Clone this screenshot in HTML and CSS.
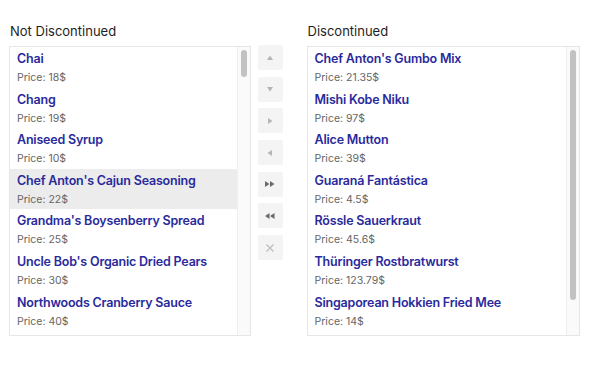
FILE: index.html
```html
<!DOCTYPE html>
<html lang="en">
  <head>
    <meta charset="UTF-8" />
    <title>ListBox</title>
    <link rel="stylesheet" href="styles.css">
  </head>
  <body>
    <div class="picklist">
      <div class="list-col list-col-source">
        <div class="list-title">Not Discontinued</div>
        <div class="list-box">
          <ul class="list-items">
            <li class="list-item"><div class="item-name">Chai</div><div class="item-price">Price: 18$</div></li>
            <li class="list-item"><div class="item-name">Chang</div><div class="item-price">Price: 19$</div></li>
            <li class="list-item"><div class="item-name">Aniseed Syrup</div><div class="item-price">Price: 10$</div></li>
            <li class="list-item selected"><div class="item-name">Chef Anton's Cajun Seasoning</div><div class="item-price">Price: 22$</div></li>
            <li class="list-item"><div class="item-name">Grandma's Boysenberry Spread</div><div class="item-price">Price: 25$</div></li>
            <li class="list-item"><div class="item-name">Uncle Bob's Organic Dried Pears</div><div class="item-price">Price: 30$</div></li>
            <li class="list-item"><div class="item-name">Northwoods Cranberry Sauce</div><div class="item-price">Price: 40$</div></li>
          </ul>
          <div class="scroll-track"><div class="scroll-thumb thumb-short"></div></div>
        </div>
      </div>

      <div class="toolbar">
        <button class="tool-btn" disabled>
          <svg width="8" height="8" viewBox="0 0 8 8"><path d="M4 1.5 L7 6 L1 6 Z" /></svg>
        </button>
        <button class="tool-btn" disabled>
          <svg width="8" height="8" viewBox="0 0 8 8"><path d="M1 2 L7 2 L4 6.5 Z" /></svg>
        </button>
        <button class="tool-btn" disabled>
          <svg width="8" height="8" viewBox="0 0 8 8"><path d="M2 1 L6.5 4 L2 7 Z" /></svg>
        </button>
        <button class="tool-btn" disabled>
          <svg width="8" height="8" viewBox="0 0 8 8"><path d="M6 1 L1.5 4 L6 7 Z" /></svg>
        </button>
        <button class="tool-btn">
          <svg width="12" height="8" viewBox="0 0 12 8"><path d="M1 1 L5.5 4 L1 7 Z M6 1 L10.5 4 L6 7 Z" /></svg>
        </button>
        <button class="tool-btn">
          <svg width="12" height="8" viewBox="0 0 12 8"><path d="M5.5 1 L1 4 L5.5 7 Z M10.5 1 L6 4 L10.5 7 Z" /></svg>
        </button>
        <button class="tool-btn" disabled>
          <svg width="10" height="10" viewBox="0 0 10 10"><path class="cross" d="M1.5 1.5 L8.5 8.5 M8.5 1.5 L1.5 8.5" /></svg>
        </button>
      </div>

      <div class="list-col list-col-target">
        <div class="list-title">Discontinued</div>
        <div class="list-box">
          <ul class="list-items">
            <li class="list-item"><div class="item-name">Chef Anton's Gumbo Mix</div><div class="item-price">Price: 21.35$</div></li>
            <li class="list-item"><div class="item-name">Mishi Kobe Niku</div><div class="item-price">Price: 97$</div></li>
            <li class="list-item"><div class="item-name">Alice Mutton</div><div class="item-price">Price: 39$</div></li>
            <li class="list-item"><div class="item-name">Guaraná Fantástica</div><div class="item-price">Price: 4.5$</div></li>
            <li class="list-item"><div class="item-name">Rössle Sauerkraut</div><div class="item-price">Price: 45.6$</div></li>
            <li class="list-item"><div class="item-name">Thüringer Rostbratwurst</div><div class="item-price">Price: 123.79$</div></li>
            <li class="list-item"><div class="item-name">Singaporean Hokkien Fried Mee</div><div class="item-price">Price: 14$</div></li>
          </ul>
          <div class="scroll-track"><div class="scroll-thumb thumb-long"></div></div>
        </div>
      </div>
    </div>
  </body>
</html>
```

FILE: styles.css
```css
body {
  margin: 0;
  font-family: Inter, "Noto Sans", sans-serif;
  background-color: #fff;
}

.picklist {
  display: flex;
  align-items: flex-start;
  padding: 21px 10px 0 9px;
}

.list-col {
  display: flex;
  flex-direction: column;
}
.list-col-source {
  width: 242px;
}
.list-col-target {
  width: 274px;
  margin-left: 24px;
}

.list-title {
  font-size: 13px;
  line-height: 20px;
  color: #1e1e1e;
  padding-left: 1px;
  margin-bottom: 5px;
}

.list-box {
  display: flex;
  height: 288px;
  border: 1px solid #e6e6e6;
  overflow: hidden;
}

.list-items {
  flex: 1;
  margin: 0;
  padding: 0;
  list-style: none;
  overflow: hidden;
}

.list-item {
  padding: 3px 7px 1.6px;
}
.list-item.selected {
  background-color: #ececec;
}

.item-name {
  font-size: 12.5px;
  line-height: 18px;
  font-weight: 600;
  letter-spacing: -0.2px;
  color: #2a2a9c;
  white-space: nowrap;
}

.item-price {
  margin-top: 2px;
  font-size: 10.5px;
  line-height: 16px;
  color: #656565;
}

.scroll-track {
  width: 12px;
  background-color: #fafafa;
  border-left: 1px solid #efefef;
  padding: 3px 0;
  display: flex;
  justify-content: center;
}
.scroll-thumb {
  width: 6px;
  border-radius: 3px;
  background-color: #c2c2c2;
}
.thumb-short {
  height: 27px;
}
.thumb-long {
  height: 250px;
}

.toolbar {
  display: flex;
  flex-direction: column;
  gap: 6.7px;
  margin-top: 24px;
  margin-left: 7px;
}

.tool-btn {
  width: 25px;
  height: 25px;
  padding: 0;
  border: none;
  border-radius: 2px;
  background-color: #f4f4f4;
  display: flex;
  align-items: center;
  justify-content: center;
  cursor: pointer;
}
.tool-btn svg {
  fill: #6a6a6a;
}
.tool-btn:disabled svg {
  fill: #b5b5b5;
}
.tool-btn .cross {
  fill: none;
  stroke: #bdbdbd;
  stroke-width: 1.3;
}
```
